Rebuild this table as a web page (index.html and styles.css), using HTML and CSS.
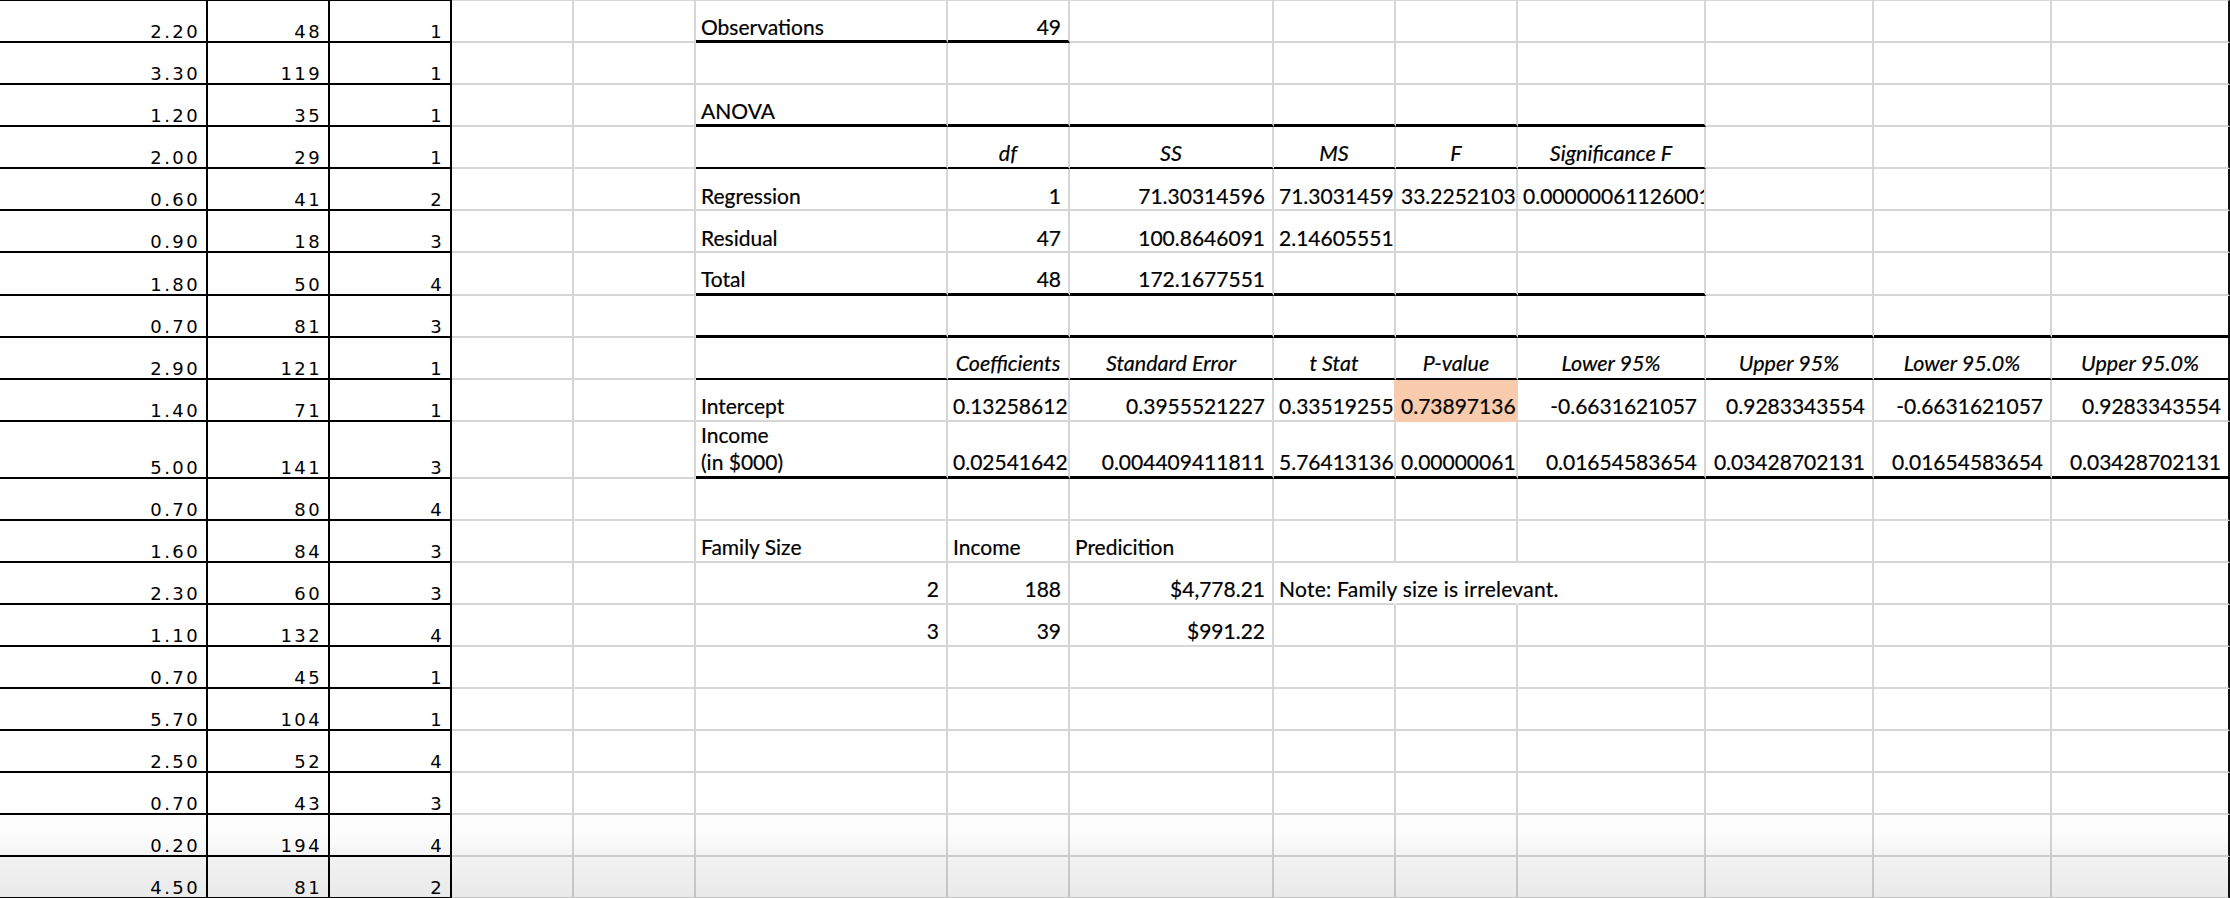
FILE: index.html
```html
<!DOCTYPE html>
<html>
<head>
<meta charset="utf-8">
<title>Regression Output</title>
<link rel="stylesheet" href="styles.css">
</head>
<body>
<div class="sheet">
  <div class="row first">
    <div class="c L">2.20</div><div class="c L">48</div><div class="c L">1</div><div class="c"></div><div class="c"></div>
    <div class="c tk">Observations</div><div class="c num tk">49</div><div class="c"></div><div class="c"></div><div class="c"></div><div class="c"></div><div class="c"></div><div class="c"></div><div class="c"></div>
  </div>
  <div class="row">
    <div class="c L">3.30</div><div class="c L">119</div><div class="c L">1</div><div class="c"></div><div class="c"></div>
    <div class="c"></div><div class="c"></div><div class="c"></div><div class="c"></div><div class="c"></div><div class="c"></div><div class="c"></div><div class="c"></div><div class="c"></div>
  </div>
  <div class="row">
    <div class="c L">1.20</div><div class="c L">35</div><div class="c L">1</div><div class="c"></div><div class="c"></div>
    <div class="c tk">ANOVA</div><div class="c tk"></div><div class="c tk"></div><div class="c tk"></div><div class="c tk"></div><div class="c tk"></div><div class="c"></div><div class="c"></div><div class="c"></div>
  </div>
  <div class="row">
    <div class="c L">2.00</div><div class="c L">29</div><div class="c L">1</div><div class="c"></div><div class="c"></div>
    <div class="c tn"></div><div class="c hd tn">df</div><div class="c hd tn">SS</div><div class="c hd tn">MS</div><div class="c hd tn">F</div><div class="c hd tn">Significance F</div><div class="c"></div><div class="c"></div><div class="c"></div>
  </div>
  <div class="row">
    <div class="c L">0.60</div><div class="c L">41</div><div class="c L">2</div><div class="c"></div><div class="c"></div>
    <div class="c">Regression</div><div class="c num">1</div><div class="c num">71.30314596</div><div class="c fit">71.3031459</div><div class="c fit">33.2252103</div><div class="c fit">0.00000061126001</div><div class="c"></div><div class="c"></div><div class="c"></div>
  </div>
  <div class="row">
    <div class="c L">0.90</div><div class="c L">18</div><div class="c L">3</div><div class="c"></div><div class="c"></div>
    <div class="c">Residual</div><div class="c num">47</div><div class="c num">100.8646091</div><div class="c fit">2.14605551</div><div class="c"></div><div class="c"></div><div class="c"></div><div class="c"></div><div class="c"></div>
  </div>
  <div class="row">
    <div class="c L">1.80</div><div class="c L">50</div><div class="c L">4</div><div class="c"></div><div class="c"></div>
    <div class="c tk">Total</div><div class="c num tk">48</div><div class="c num tk">172.1677551</div><div class="c tk"></div><div class="c tk"></div><div class="c tk"></div><div class="c"></div><div class="c"></div><div class="c"></div>
  </div>
  <div class="row">
    <div class="c L">0.70</div><div class="c L">81</div><div class="c L">3</div><div class="c"></div><div class="c"></div>
    <div class="c tk"></div><div class="c tk"></div><div class="c tk"></div><div class="c tk"></div><div class="c tk"></div><div class="c tk"></div><div class="c tk"></div><div class="c tk"></div><div class="c tk"></div>
  </div>
  <div class="row">
    <div class="c L">2.90</div><div class="c L">121</div><div class="c L">1</div><div class="c"></div><div class="c"></div>
    <div class="c tn"></div><div class="c hd tn">Coefficients</div><div class="c hd tn">Standard Error</div><div class="c hd tn">t Stat</div><div class="c hd tn">P-value</div><div class="c hd tn">Lower 95%</div><div class="c hd tn">Upper 95%</div><div class="c hd tn">Lower 95.0%</div><div class="c hd tn">Upper 95.0%</div>
  </div>
  <div class="row">
    <div class="c L">1.40</div><div class="c L">71</div><div class="c L">1</div><div class="c"></div><div class="c"></div>
    <div class="c">Intercept</div><div class="c fit">0.13258612</div><div class="c num">0.3955521227</div><div class="c fit hl-prev">0.33519255</div><div class="c fit hl">0.73897136</div><div class="c num">-0.6631621057</div><div class="c num">0.9283343554</div><div class="c num">-0.6631621057</div><div class="c num">0.9283343554</div>
  </div>
  <div class="row tall">
    <div class="c L">5.00</div><div class="c L">141</div><div class="c L">3</div><div class="c"></div><div class="c"></div>
    <div class="c tk wrap"><span>Income<br>(in $000)</span></div><div class="c fit tk">0.02541642</div><div class="c num tk">0.004409411811</div><div class="c fit tk">5.76413136</div><div class="c fit tk">0.00000061</div><div class="c num tk">0.01654583654</div><div class="c num tk">0.03428702131</div><div class="c num tk">0.01654583654</div><div class="c num tk">0.03428702131</div>
  </div>
  <div class="row std">
    <div class="c L">0.70</div><div class="c L">80</div><div class="c L">4</div><div class="c"></div><div class="c"></div>
    <div class="c"></div><div class="c"></div><div class="c"></div><div class="c"></div><div class="c"></div><div class="c"></div><div class="c"></div><div class="c"></div><div class="c"></div>
  </div>
  <div class="row std">
    <div class="c L">1.60</div><div class="c L">84</div><div class="c L">3</div><div class="c"></div><div class="c"></div>
    <div class="c">Family Size</div><div class="c">Income</div><div class="c">Predicition</div><div class="c"></div><div class="c"></div><div class="c"></div><div class="c"></div><div class="c"></div><div class="c"></div>
  </div>
  <div class="row std">
    <div class="c L">2.30</div><div class="c L">60</div><div class="c L">3</div><div class="c"></div><div class="c"></div>
    <div class="c num">2</div><div class="c num">188</div><div class="c num">$4,778.21</div><div class="c spill">Note: Family size is irrelevant.</div><div class="c nogrid"></div><div class="c"></div><div class="c"></div><div class="c"></div><div class="c"></div>
  </div>
  <div class="row std">
    <div class="c L">1.10</div><div class="c L">132</div><div class="c L">4</div><div class="c"></div><div class="c"></div>
    <div class="c num">3</div><div class="c num">39</div><div class="c num">$991.22</div><div class="c"></div><div class="c"></div><div class="c"></div><div class="c"></div><div class="c"></div><div class="c"></div>
  </div>
  <div class="row std">
    <div class="c L">0.70</div><div class="c L">45</div><div class="c L">1</div><div class="c"></div><div class="c"></div>
    <div class="c"></div><div class="c"></div><div class="c"></div><div class="c"></div><div class="c"></div><div class="c"></div><div class="c"></div><div class="c"></div><div class="c"></div>
  </div>
  <div class="row std">
    <div class="c L">5.70</div><div class="c L">104</div><div class="c L">1</div><div class="c"></div><div class="c"></div>
    <div class="c"></div><div class="c"></div><div class="c"></div><div class="c"></div><div class="c"></div><div class="c"></div><div class="c"></div><div class="c"></div><div class="c"></div>
  </div>
  <div class="row std">
    <div class="c L">2.50</div><div class="c L">52</div><div class="c L">4</div><div class="c"></div><div class="c"></div>
    <div class="c"></div><div class="c"></div><div class="c"></div><div class="c"></div><div class="c"></div><div class="c"></div><div class="c"></div><div class="c"></div><div class="c"></div>
  </div>
  <div class="row std">
    <div class="c L">0.70</div><div class="c L">43</div><div class="c L">3</div><div class="c"></div><div class="c"></div>
    <div class="c"></div><div class="c"></div><div class="c"></div><div class="c"></div><div class="c"></div><div class="c"></div><div class="c"></div><div class="c"></div><div class="c"></div>
  </div>
  <div class="row std">
    <div class="c L">0.20</div><div class="c L">194</div><div class="c L">4</div><div class="c"></div><div class="c"></div>
    <div class="c"></div><div class="c"></div><div class="c"></div><div class="c"></div><div class="c"></div><div class="c"></div><div class="c"></div><div class="c"></div><div class="c"></div>
  </div>
  <div class="row std">
    <div class="c L">4.50</div><div class="c L">81</div><div class="c L">2</div><div class="c"></div><div class="c"></div>
    <div class="c"></div><div class="c"></div><div class="c"></div><div class="c"></div><div class="c"></div><div class="c"></div><div class="c"></div><div class="c"></div><div class="c"></div>
  </div>
</div>
<div class="fade"></div>
</body>
</html>
```

FILE: styles.css
```css
html, body {
  margin: 0;
  padding: 0;
  background: #ffffff;
}
body {
  width: 2230px;
  height: 898px;
  overflow: hidden;
  position: relative;
}
.sheet {
  display: flex;
  flex-direction: column;
  width: 2230px;
}
.row {
  display: grid;
  grid-template-columns: 208px 122px 122px 122px 122px 252px 122px 204px 122px 122px 188px 168px 178px 178px;
  height: 42.1px;
  flex: none;
}
.row.first { height: 43px; }
.row.tall { height: 57px; }
.row.std { height: 42px; }

.c {
  box-sizing: border-box;
  min-width: 0;
  border-right: 2px solid #d6d6d6;
  border-bottom: 2px solid #d6d6d6;
  overflow: hidden;
  white-space: nowrap;
  display: flex;
  align-items: flex-end;
  justify-content: flex-start;
  padding: 0 7px 0.5px 5px;
  font-family: Lato, "Liberation Sans", sans-serif;
  font-size: 21px;
  line-height: 27px;
  color: #000;
  -webkit-text-stroke: 0.2px #000;
}
.row.first .c { border-top: 1px solid #d6d6d6; }
.c:last-child { border-right-color: #111111; }

.c.L {
  border-right-color: #000;
  border-bottom-color: #000;
  font-family: "DejaVu Sans", Verdana, sans-serif;
  font-size: 18px;
  line-height: 18px;
  letter-spacing: 2.4px;
  justify-content: flex-end;
  padding: 0 6px 0 0;
  -webkit-text-stroke: 0;
}
.row.first .c.L { border-top-color: #000; }

.num { justify-content: flex-end; }
.fit { padding-right: 0; }
.hd {
  font-style: italic;
  font-size: 21.5px;
  justify-content: center;
  padding-left: 0;
  padding-right: 0;
}
.tk { border-bottom: 3px solid #000; }
.tn { border-bottom-color: #000; }
.wrap { white-space: normal; }
.txt { letter-spacing: 0.2px; }

.hl {
  background: #f8cbad;
  border-right-color: #f8cbad;
  border-bottom-color: #f8cbad;
}
.hl-prev { border-right-color: #f8cbad; }

.spill {
  overflow: visible;
  border-right-color: transparent;
  letter-spacing: 0.25px;
}
.nogrid { border-right-color: transparent; }

.fade {
  position: absolute;
  left: 0;
  right: 2px;
  bottom: 0;
  height: 100px;
  pointer-events: none;
  background: linear-gradient(to bottom, rgba(0,0,0,0) 0%, rgba(0,0,0,0.015) 40%, rgba(0,0,0,0.05) 60%, rgba(0,0,0,0.085) 100%);
}
```
